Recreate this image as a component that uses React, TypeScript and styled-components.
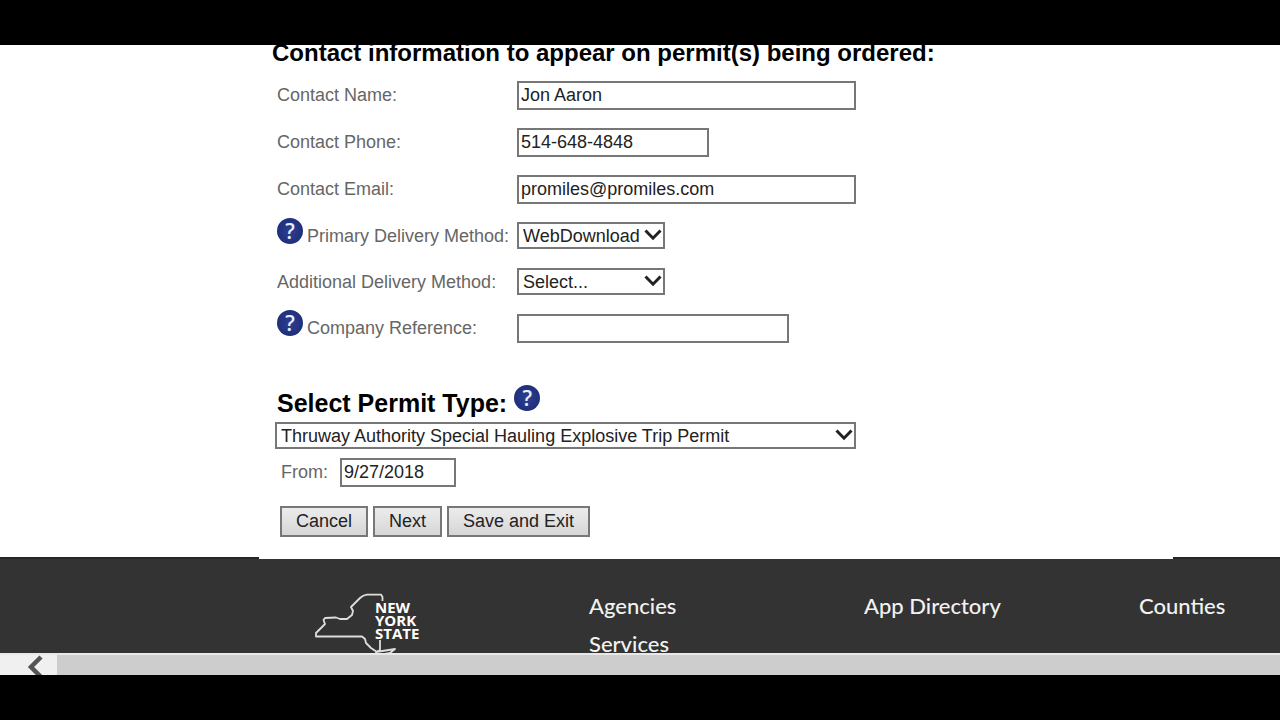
import React from "react";
import styled, { createGlobalStyle } from "styled-components";

const GlobalStyle = createGlobalStyle`
  *, *::before, *::after { box-sizing: border-box; }
  body {
    margin: 0;
    background: #000;
    color: #222;
    font: 18px/24px "Liberation Sans", Arial, sans-serif;
  }
  button, input, select { font: inherit; color: inherit; }
`;

const Frame = styled.div`
  display: flex;
  flex-direction: column;
  height: 100vh;
  padding: 45px 0;
`;

const Viewport = styled.div`
  display: flex;
  flex-direction: column;
  flex: 1;
  min-height: 0;
  overflow: hidden;
  background: #fff;
`;

const Content = styled.main`
  position: relative;
  z-index: 1;
  flex: none;
  width: 914px;
  margin: -6px 0 -2px 259px;
  padding: 0 0 22px 16px;
  background: #fff;
`;

const Heading = styled.h2<{ $size: number }>`
  margin: 0;
  color: #000;
  font-size: ${(p) => p.$size}px;
  line-height: 28px;
  font-weight: bold;
`;

const PageHeading = styled(Heading)`
  margin-left: -3px;
`;

const Fields = styled.div`
  display: grid;
  gap: 19px;
  padding: 14px 0 0 2px;
`;

const Field = styled.div`
  display: grid;
  grid-template-columns: 240px 1fr;
  align-items: center;
`;

const LabelCell = styled.div`
  display: flex;
  align-items: center;
  height: 24px;
`;

const Label = styled.label`
  color: #666;
  white-space: nowrap;
`;

const HelpButton = styled.button`
  flex: none;
  width: 26px;
  height: 26px;
  margin: -6px 4px 4px 0;
  padding: 0;
  border: 0;
  border-radius: 50%;
  background: radial-gradient(circle, #2c3f92 0%, #1d2d78 80%);
  color: #e8ecff;
  font: 600 21px/26px "Open Sans", sans-serif;
  text-align: center;
`;

const TextInput = styled.input<{ $width: number }>`
  width: ${(p) => p.$width}px;
  height: 29px;
  margin-bottom: -1px;
  padding: 0 2px 1px;
  border: 2px solid #777;
  border-radius: 0;
  outline: 0;
  background: #fff;
`;

const SelectBox = styled.div<{ $width: number }>`
  position: relative;
  width: ${(p) => p.$width}px;
  height: 27px;

  select {
    appearance: none;
    display: block;
    width: 100%;
    height: 100%;
    padding: 0 24px 1px 4px;
    border: 2px solid #777;
    border-radius: 0;
    background: #fff;
  }

  svg {
    position: absolute;
    top: 7px;
    right: 3px;
    pointer-events: none;
  }
`;

const PermitTitle = styled.div`
  display: flex;
  align-items: center;
  gap: 7px;
  margin: 47px 0 5px 2px;
`;

const DateRow = styled.div`
  display: flex;
  align-items: center;
  gap: 12px;
  margin: 9px 0 0 6px;
`;

const Actions = styled.div`
  display: flex;
  gap: 5px;
  margin: 20px 0 0 5px;
`;

const ActionButton = styled.button`
  height: 31px;
  padding: 0 14px 2px;
  border: 2px solid #777;
  border-radius: 0;
  background: linear-gradient(#ececec, #d6d6d6);
`;

const Footer = styled.footer`
  flex: 1;
  display: grid;
  grid-template-columns: repeat(4, 275px);
  min-height: 0;
  padding: 28px 0 0 314px;
  overflow: hidden;
  border-top: 2px solid #262626;
  background: #333;
`;

const FooterLinks = styled.nav`
  display: flex;
  flex-direction: column;
  align-items: flex-start;

  a {
    color: #f2f2f2;
    font: 500 22px/38px Lato, sans-serif;
    text-decoration: none;
    white-space: nowrap;
  }
`;

const Logo = styled.svg`
  display: block;
  margin-top: 2px;
  overflow: visible;
`;

const ScrollTrack = styled.div`
  flex: none;
  display: flex;
  height: 22px;
  overflow: hidden;
  border-top: 2px solid #e8e8e8;
  background: #cdcdcd;
`;

const ScrollArrow = styled.button`
  width: 57px;
  padding: 0 0 0 27px;
  border: 0;
  background: #f0f0f0;

  svg { display: block; }
`;

function Help({ topic }: { topic: string }) {
  return <HelpButton type="button" aria-label={`Help: ${topic}`}>?</HelpButton>;
}

function Dropdown({ id, width, options, label }: { id: string; width: number; options: string[]; label?: string }) {
  return (
    <SelectBox $width={width}>
      <select id={id} aria-label={label}>
        {options.map((o) => <option key={o}>{o}</option>)}
      </select>
      <svg width="18" height="12" viewBox="0 0 18 12" fill="none" stroke="#222" strokeWidth="3" aria-hidden="true">
        <path d="M1.5 1.5 9 9.2 16.5 1.5" />
      </svg>
    </SelectBox>
  );
}

function FormField({ id, label, help, children }: { id: string; label: string; help?: boolean; children: React.ReactNode }) {
  return (
    <Field>
      <LabelCell>
        {help && <Help topic={label} />}
        <Label htmlFor={id}>{label}:</Label>
      </LabelCell>
      {children}
    </Field>
  );
}

export default function App() {
  return (
    <Frame>
      <GlobalStyle />
      <Viewport>
        <Content>
          <PageHeading $size={24}>Contact information to appear on permit(s) being ordered:</PageHeading>
          <Fields>
            <FormField id="name" label="Contact Name">
              <TextInput id="name" $width={339} defaultValue="Jon Aaron" />
            </FormField>
            <FormField id="phone" label="Contact Phone">
              <TextInput id="phone" $width={192} defaultValue="514-648-4848" />
            </FormField>
            <FormField id="email" label="Contact Email">
              <TextInput id="email" $width={339} defaultValue="promiles@promiles.com" />
            </FormField>
            <FormField id="primary" label="Primary Delivery Method" help>
              <Dropdown id="primary" width={148} options={["WebDownload"]} />
            </FormField>
            <FormField id="additional" label="Additional Delivery Method">
              <Dropdown id="additional" width={148} options={["Select..."]} />
            </FormField>
            <FormField id="reference" label="Company Reference" help>
              <TextInput id="reference" $width={272} />
            </FormField>
          </Fields>
          <PermitTitle>
            <Heading $size={25}>Select Permit Type:</Heading>
            <Help topic="Select Permit Type" />
          </PermitTitle>
          <Dropdown
            id="permit"
            width={581}
            label="Permit type"
            options={["Thruway Authority Special Hauling Explosive Trip Permit"]}
          />
          <DateRow>
            <Label htmlFor="from">From:</Label>
            <TextInput id="from" $width={116} defaultValue="9/27/2018" />
          </DateRow>
          <Actions>
            <ActionButton type="button">Cancel</ActionButton>
            <ActionButton type="button">Next</ActionButton>
            <ActionButton type="button">Save and Exit</ActionButton>
          </Actions>
        </Content>
        <Footer>
          <Logo width="110" height="70" viewBox="0 0 110 70" role="img" aria-label="New York State">
            <g fill="none" stroke="#dedede" strokeWidth="1.8" strokeLinejoin="round">
              <path d="M68.5 12V8L67 5.6H53C50 6 48 7 46 9L40 15L37 18L39 22L38 26L33 30H26L22 28.5L11 29L9.500 31L11 35L7 39L2 44V47.5H48L51 50L52 54L57 59L63 63" />
              <path d="M66 51V61L62 63L81 60L76 64L64 66" />
            </g>
            <g fill="#fff" fontFamily="Open Sans, sans-serif" fontSize="15" fontWeight="700">
              <text x="61" y="24">NEW</text>
              <text x="61" y="37">YORK</text>
              <text x="61" y="50">STATE</text>
            </g>
          </Logo>
          <FooterLinks>
            <a href="#agencies">Agencies</a>
            <a href="#services">Services</a>
          </FooterLinks>
          <FooterLinks>
            <a href="#apps">App Directory</a>
          </FooterLinks>
          <FooterLinks>
            <a href="#counties">Counties</a>
          </FooterLinks>
        </Footer>
      </Viewport>
      <ScrollTrack>
        <ScrollArrow type="button" aria-label="Scroll left">
          <svg width="16" height="20" viewBox="0 0 16 20" fill="none" stroke="#555" strokeWidth="4.5" aria-hidden="true">
            <path d="M14 2 4 12 14 22" />
          </svg>
        </ScrollArrow>
      </ScrollTrack>
    </Frame>
  );
}
